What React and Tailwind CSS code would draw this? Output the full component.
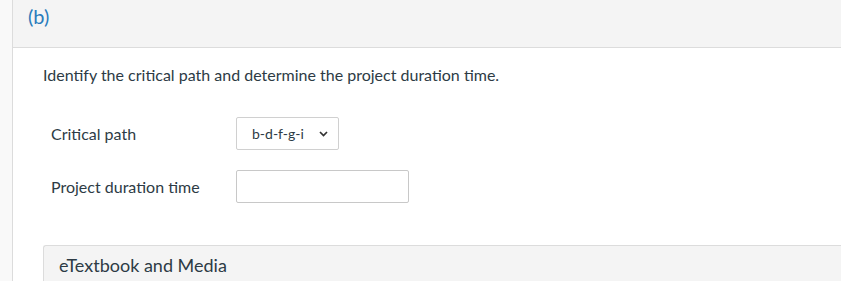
import React from "react";

export default function App() {
  return (
    <div className="flex h-[281px] w-[841px] overflow-hidden bg-white" style={{ fontFamily: "Lato, 'Open Sans', sans-serif" }}>
      <div className="w-[13px] shrink-0 bg-[#f9f9f9] border-r border-[#dcdcdc]" />
      <div className="flex-1 flex flex-col min-w-0">
        <div className="h-[48px] shrink-0 bg-[#f4f4f4] border-b border-[#dcdcdc] pl-[15px] pt-[3px]">
          <span className="text-[20px] leading-[26px] text-[#2a7cbc]">(b)</span>
        </div>
        <div className="pl-[30px] pt-[17px]">
          <p className="text-[16px] leading-[20px] text-[#2d3b45]">
            Identify the critical path and determine the project duration time.
          </p>
          <div className="mt-[32px] pl-[8px] flex items-center">
            <span className="w-[185px] text-[16px] text-[#2d3b45]">Critical path</span>
            <div className="w-[103px] h-[33px] border border-[#d0d0d0] rounded-[2px] flex items-center justify-between pl-[15px] pr-[10px] bg-white">
              <span className="text-[14px] text-[#2d3b45]">b-d-f-g-i</span>
              <svg width="9" height="6" viewBox="0 0 9 6" fill="none">
                <path d="M1 1l3.5 3.5L8 1" stroke="#333" strokeWidth="1.7" />
              </svg>
            </div>
          </div>
          <div className="mt-[20px] pl-[8px] flex items-center">
            <span className="w-[185px] text-[16px] text-[#2d3b45]">Project duration time</span>
            <div className="w-[173px] h-[33px] border border-[#c8c8c8] rounded-[2px] bg-white" />
          </div>
          <div className="mt-[42px] h-[60px] border-l border-t border-[#dcdcdc] rounded-tl-[3px] bg-[#f4f4f4] pl-[15px] pt-[7px]">
            <span className="text-[18px] leading-[24px] text-[#2d3b45]">eTextbook and Media</span>
          </div>
        </div>
      </div>
    </div>
  );
}
